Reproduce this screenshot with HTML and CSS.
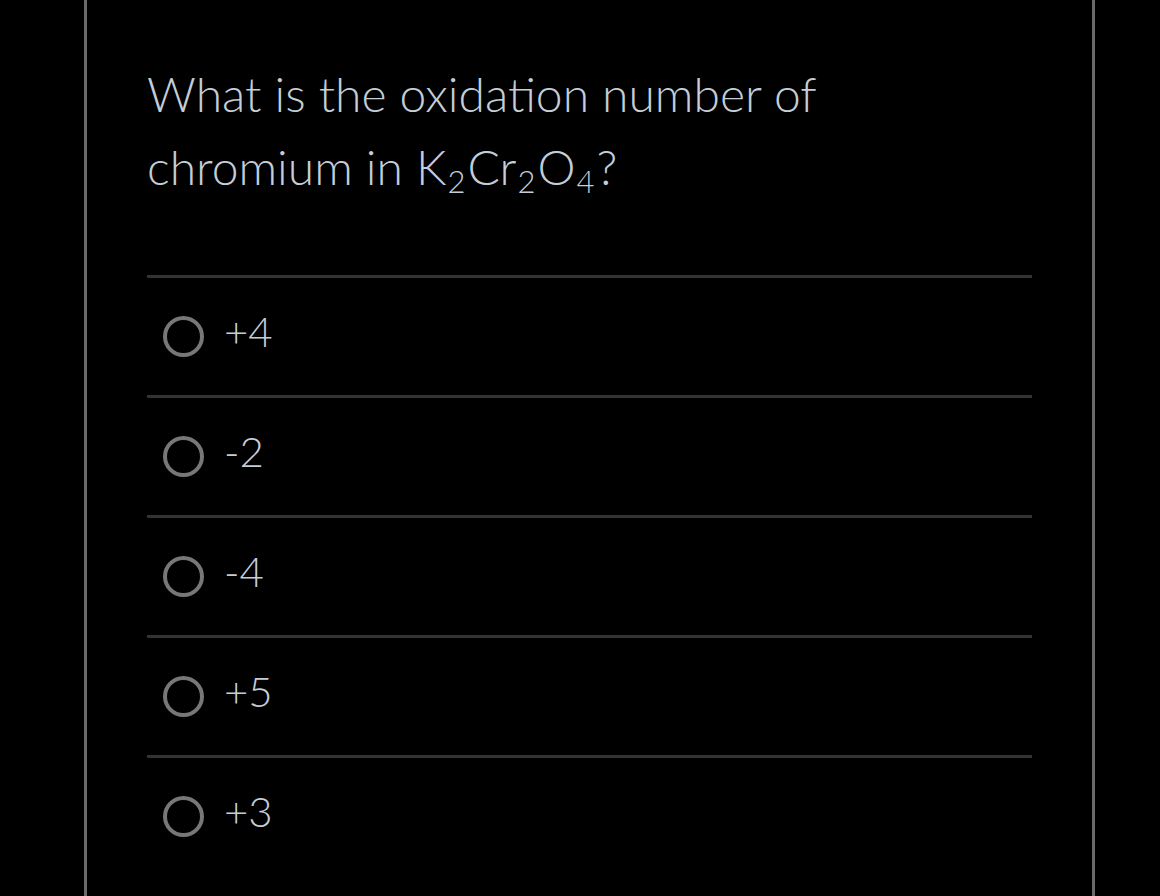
FILE: index.html
```html
<!DOCTYPE html>
<html lang="en">
<head>
<meta charset="utf-8">
<title>Question</title>
<link rel="stylesheet" href="styles.css">
</head>
<body>
<main class="frame">
  <h1 class="question">What is the oxidation number of chromium in K<sub>2</sub>Cr<sub>2</sub>O<sub>4</sub>?</h1>
  <ul class="options">
    <li class="option"><span class="radio"></span><span class="label">+4</span></li>
    <li class="option"><span class="radio"></span><span class="label">-2</span></li>
    <li class="option"><span class="radio"></span><span class="label">-4</span></li>
    <li class="option"><span class="radio"></span><span class="label">+5</span></li>
    <li class="option"><span class="radio"></span><span class="label">+3</span></li>
  </ul>
</main>
</body>
</html>
```
FILE: styles.css
```css
html, body {
  margin: 0;
  padding: 0;
  background: #000;
  height: 100%;
}
body {
  font-family: "Lato Light", Lato, "Open Sans", sans-serif;
  font-weight: 300;
  color: #c3ced8;
  overflow: hidden;
}
.frame {
  box-sizing: border-box;
  margin-left: 84px;
  width: 1011px;
  min-height: 896px;
  border-left: 3px solid #6a6a6a;
  border-right: 3px solid #6a6a6a;
  padding: 57px 60px 0 60px;
}
.question {
  margin: 0;
  font-size: 48px;
  font-weight: 300;
  line-height: 73px;
  max-width: 720px;
}
.question sub {
  font-size: 31px;
  line-height: 0;
  vertical-align: -8px;
  margin: 0 2px 0 1px;
}
.options {
  list-style: none;
  margin: 72px 0 0 0;
  padding: 0;
}
.option {
  display: flex;
  align-items: center;
  height: 117px;
  border-top: 3px solid #333;
  padding-left: 16px;
  gap: 20px;
}
.radio {
  box-sizing: border-box;
  width: 41px;
  height: 41px;
  border: 4px solid #777;
  border-radius: 50%;
  flex: none;
}
.label {
  font-size: 42px;
  line-height: 1;
  padding-bottom: 12px;
}
```
